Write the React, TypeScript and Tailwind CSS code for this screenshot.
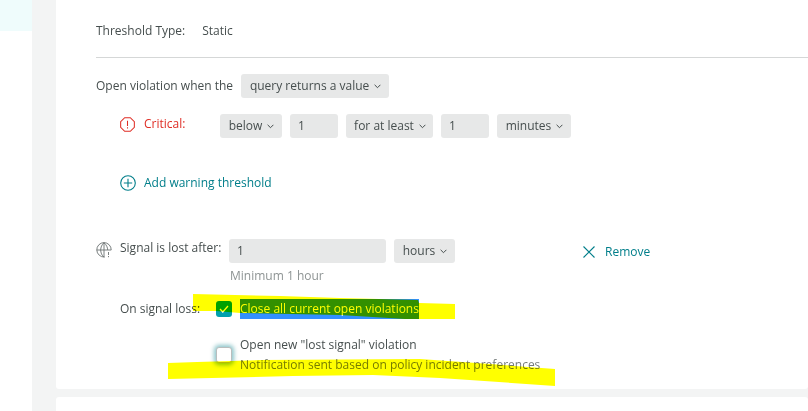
const Chevron = () => (
  <svg width="7" height="5" viewBox="0 0 7 5" fill="none" stroke="currentColor" strokeWidth="1" className="ml-[5px] mt-px">
    <path d="M0.6 0.8 3.5 3.7 6.4 0.8" />
  </svg>
);

function Select({ label, className = "" }: { label: string; className?: string }) {
  return (
    <div className={`h-6 flex items-center justify-center pl-px rounded-[3px] bg-[#e7e8e8] text-[#464e4e] ${className}`}>
      {label}
      <Chevron />
    </div>
  );
}

function Field({ value, className = "" }: { value: string; className?: string }) {
  return <div className={`h-6 flex items-center pl-[8px] rounded-[3px] bg-[#e7e8e8] text-[#464e4e] ${className}`}>{value}</div>;
}

export default function App() {
  return (
    <div
      className="relative w-[808px] h-[411px] overflow-hidden flex bg-white text-[12px] text-[#464e4e]"
      style={{ fontFamily: '"Open Sans", sans-serif' }}
    >
      <aside className="w-8 shrink-0 bg-white">
        <div className="h-[31px] bg-[#effcfc]" />
      </aside>
      <main className="flex-1 bg-[#f3f4f4] pl-6 flex flex-col gap-2">
        <section className="h-[389px] shrink-0 bg-white rounded-b-[3px] pl-10 flex flex-col">
          <div className="h-[58px] border-b border-[#d5d7d7] flex items-start gap-[17px] pt-[22px] leading-[17px]">
            <span>Threshold Type:</span>
            <span>Static</span>
          </div>

          <div className="mt-4 flex items-center gap-2 h-6">
            <span>Open violation when the</span>
            <Select label="query returns a value" className="w-[148px]" />
          </div>

          <div className="mt-4 ml-6 flex items-start h-6">
            <svg width="15" height="15" viewBox="0 0 16 16" fill="none" stroke="#df2d24" strokeWidth="1.1" className="mt-[3px] shrink-0">
              <path d="M5 .7h6L15.3 5v6L11 15.3H5L.7 11V5z" />
              <path d="M8 4v5.5M8 11v1.2" />
            </svg>
            <span className="ml-[9px] text-[#df2d24] leading-[17px] mt-[1px] w-[76px] shrink-0">Critical:</span>
            <div className="flex gap-2">
              <Select label="below" className="w-[62px]" />
              <Field value="1" className="w-[48px]" />
              <Select label="for at least" className="w-[87px]" />
              <Field value="1" className="w-[48px]" />
              <Select label="minutes" className="w-[74px]" />
            </div>
          </div>

          <div className="mt-[37px] ml-6 flex items-center text-[#007e8a] h-4">
            <svg width="16" height="16" viewBox="0 0 16 16" fill="none" stroke="#007e8a" strokeWidth="1.1">
              <circle cx="8" cy="8" r="7.3" />
              <path d="M8 3.8v8.4M3.8 8h8.4" />
            </svg>
            <span className="ml-2">Add warning threshold</span>
          </div>

          <div className="mt-12 flex items-start h-6">
            <svg width="16" height="16" viewBox="0 0 16 16" fill="none" stroke="#6b7272" strokeWidth="0.9" className="mt-[3px] shrink-0">
              <path d="M8.5 15A7.2 7.2 0 1 1 15.2 8" />
              <path d="M8 .8C3.6 4.5 3.6 11.5 8 15.2M8 .8C10.6 3 11.6 5.5 11.7 8" />
              <path d="M.8 8h14.4M8 .8v14.4" />
              <path d="M12.5 10v3M12.5 14v1.2" />
            </svg>
            <span className="ml-2 w-[109px] shrink-0 leading-[17px]">Signal is lost after:</span>
            <Field value="1" className="w-[157px]" />
            <Select label="hours" className="ml-2 w-[61px]" />
            <div className="ml-[127px] flex items-center text-[#007e8a] h-6 pt-[2px]">
              <svg width="14" height="14" viewBox="0 0 14 14" fill="none" stroke="#007e8a" strokeWidth="1.1">
                <path d="M1.5 1.5l11 11M12.5 1.5l-11 11" />
              </svg>
              <span className="ml-[9px]">Remove</span>
            </div>
          </div>

          <div className="mt-1 ml-[134px] text-[#8e9494] leading-[17px]">Minimum 1 hour</div>

          <div className="mt-[15px] ml-6 flex items-center h-5">
            <span className="w-[96px]">On signal loss:</span>
            <div className="w-4 h-4 rounded-[3px] bg-[#00a0ae] flex items-center justify-center">
              <svg width="10" height="8" viewBox="0 0 10 8" fill="none" stroke="#fff" strokeWidth="1.3">
                <path d="M1 4l2.8 3L9 1" />
              </svg>
            </div>
            <span className="ml-2 leading-5 bg-[#3390ff] text-white">Close all current open violations</span>
          </div>

          <div className="mt-4 ml-[120px] flex items-center">
            <div className="w-4 h-4 rounded-[3px] bg-white border border-[#b9bdbd] shadow-[0_0_4px_2px_rgba(0,126,138,0.45)]" />
            <div className="ml-2 leading-5">
              <div>Open new "lost signal" violation</div>
              <div className="text-[#767c7c]">Notification sent based on policy incident preferences</div>
            </div>
          </div>
        </section>
        <section className="flex-1 bg-white rounded-t-[3px]" />
      </main>

      <svg width="808" height="411" viewBox="0 0 808 411" className="absolute left-0 top-0 pointer-events-none" style={{ mixBlendMode: "multiply" }}>
        <path d="M193 294L280 296L340 298L418 300L419 303L455 304V319H405L340 315L240 313L216 311H193Z" fill="#ffff00" />
        <path d="M168 363L197 362L260 360L420 359L490 364L555 369V386L440 378L373 375L293 376L168 379Z" fill="#ffff00" />
      </svg>
    </div>
  );
}
